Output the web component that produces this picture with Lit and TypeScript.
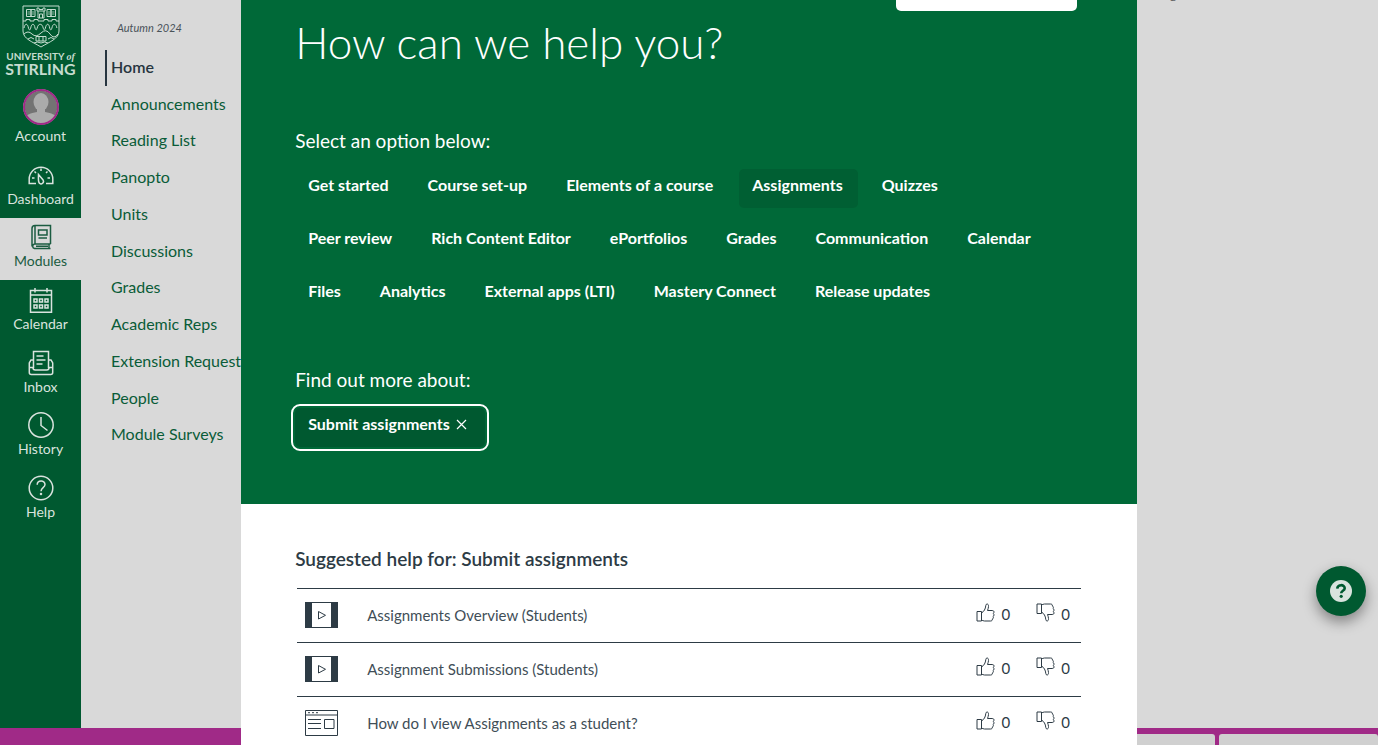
import { LitElement, html, svg, css, type TemplateResult } from "lit";
import { customElement, property, state } from "lit/decorators.js";
import { classMap } from "lit/directives/class-map.js";

const navIcons: Record<string, TemplateResult> = {
  Account: html`<svg class="avatar" viewBox="0 0 36 36" aria-hidden="true">
    <clipPath id="face"><circle cx="18" cy="18" r="17" /></clipPath>
    <circle cx="18" cy="18" r="17" fill="#737373" />
    <g clip-path="url(#face)" fill="#ababab" stroke="none">
      <ellipse cx="18" cy="13" rx="7.500" ry="9" />
      <path d="M14 18h8v5c7 1 10 3 12 5v8H2v-8c2-2 5-4 12-5z" />
    </g>
    <circle cx="18" cy="18" r="17" fill="none" stroke="#a02a87" stroke-width="2" />
  </svg>`,
  Dashboard: html`<svg viewBox="0 0 26 26" aria-hidden="true">
    <path d="M8 21.500H1.200V17a11.800 11.800 0 0 1 23.600 0v4.500H18" />
    <path d="M4 16h2.500M19.500 16H22M6.500 9.500l1.500 1.500M19.500 9.500l-1.500 1.500M13 6.500V9" />
    <path d="M10.500 12.500l4.600 5.500c1.500 2.600-1.600 5-3.600 3.300-1.600-1.300-1-3-1-8.800z" />
  </svg>`,
  Modules: html`<svg viewBox="0 0 26 26" aria-hidden="true">
    <path d="M22.500 20H6.500a2.300 2.300 0 0 0 0 4.500h16M22.500 20V1.500H7A3 3 0 0 0 4 4.500V22.500M7 2V20M21 20v4.500M8 22.200h12" />
    <path d="M10.500 6h8.500v5h-8.500zM10.500 14h8.500" />
  </svg>`,
  Calendar: html`<svg viewBox="0 0 26 26" aria-hidden="true">
    <path d="M2.500 3.500h21v21.800h-21zM2.500 8h21M7 1v4.500M19 1v4.500" />
    <path d="M6 12h3v3H6zM11.500 12h3v3h-3zM17 12h3v3h-3zM6 18h3v3H6zM11.500 18h3v3h-3zM17 18h3v3h-3z" />
  </svg>`,
  Inbox: html`<svg viewBox="0 0 26 26" aria-hidden="true">
    <path d="M5.500 18V1.500h15V18M8.500 6h7M8.500 10h9M8.500 14h6" />
    <path d="M5.500 10H3l-1.700 3v9.500a2 2 0 0 0 2 2h19.400a2 2 0 0 0 2-2V13L23 10h-2.500M1.300 17.500H5c0 1.500.8 2.500 2.200 2.500h11.600c1.400 0 2.200-1 2.200-2.500h3.700" />
  </svg>`,
  History: html`<svg viewBox="0 0 26 26" aria-hidden="true">
    <circle cx="13" cy="13" r="12.200" /><path d="M13 5v8.500l6.500 5" />
  </svg>`,
  Help: html`<svg viewBox="0 0 26 26" aria-hidden="true">
    <circle cx="13" cy="13" r="11.800" />
    <path d="M9.200 9.800c0-5 7.800-5 7.800-.3 0 3-4 3.200-4 6.700" />
    <circle cx="13" cy="19" r=".5" />
  </svg>`,
};

const courseLinks = [
  "Home", "Announcements", "Reading List", "Panopto", "Units", "Discussions",
  "Grades", "Academic Reps", "Extension Requests", "People", "Module Surveys",
];

const topics = [
  "Get started", "Course set-up", "Elements of a course", "Assignments", "Quizzes",
  "Peer review", "Rich Content Editor", "ePortfolios", "Grades", "Communication",
  "Calendar", "Files", "Analytics", "External apps (LTI)", "Mastery Connect", "Release updates",
];

const results = [
  { kind: "video", title: "Assignments Overview (Students)", up: 0, down: 0 },
  { kind: "video", title: "Assignment Submissions (Students)", up: 0, down: 0 },
  { kind: "guide", title: "How do I view Assignments as a student?", up: 0, down: 0 },
];

@customElement("global-nav")
class GlobalNav extends LitElement {
  static styles = css`
    :host {
      display: block;
      width: 81px;
      flex: none;
      background: #005930;
      color: #d9e3de;
    }
    .logo {
      display: flex;
      flex-direction: column;
      align-items: center;
      height: 88px;
      box-sizing: border-box;
      padding-top: 5px;
      color: #c5dccf;
      text-decoration: none;
      white-space: nowrap;
    }
    .shield { width: 38px; height: 44px; fill: none; stroke: currentColor; }
    .uni { font-size: 10px; line-height: 14px; font-weight: 700; }
    .of { font-family: "Liberation Serif", serif; font-style: italic; }
    .city { font-size: 16px; line-height: 10px; font-weight: 700; }
    .items {
      display: grid;
      grid-template-rows: auto;
      grid-auto-rows: 1fr;
      height: 443px;
      margin: 0;
      padding: 0;
      list-style: none;
    }
    .item {
      display: flex;
      flex-direction: column;
      align-items: center;
      justify-content: flex-end;
      height: 100%;
      box-sizing: border-box;
      padding-bottom: 10px;
      gap: 2px;
      color: inherit;
      font-size: 14px;
      line-height: 18px;
      text-decoration: none;
    }
    .current { background: #d9d9d9; color: #1b5c41; }
    .item svg { width: 26px; height: 26px; fill: none; stroke: currentColor; stroke-width: 1.5; }
    .item .avatar { width: 36px; height: 36px; padding-top: 1px; }
  `;
  render() {
    return html`
      <a class="logo" href="#" aria-label="University of Stirling">
        <svg class="shield" viewBox="0 0 38 44" stroke-width="1" aria-hidden="true">
          <path d="M1 1h36v25c0 8-10 11-18 16C11 37 1 34 1 26z" />
          <path d="M1 16h3v-1.500h4V16h4v-1.500h4V16h6v-1.500h4V16h4v-1.500h4V16h3" />
          <path d="M4.500 4.500h4.500v7H4.500zM9 4.500h4v7H9zM25 4.500h4v7h-4zM29 4.500h4.500v7H29zM15 3v3h8V3h-2v1.500h-4V3zM16 6v7h6V6M17.500 13V9h3v4" />
          <path d="M5.500 7H8M5.500 9H8M10 7h2M10 9h2M26 7h2M26 9h2M30 7h2.500M30 9h2.500" stroke-width=".7" />
          <path d="M2 23c1-5 3.500-5 4.500 0 .8 2.500 1.500 2.500 2.200 0 1-5 3.500-5 4.300 0 .8 2.500 1.500 2.500 2.200 0 1-5 5-5 6 0 .8 2.500 1.500 2.500 2.200 0 1-5 3.500-5 4.300 0 .8 2.500 1.500 2.500 2.200 0 1-5 4-5 5 0" />
          <path d="M2 29q4-4 8 0t9-1 9 1 8 0M6 34q3-3 6 0M26 34q3-3 6 0M12 38q3-2 7 0 4-2 7 0" />
          <path d="M14 31.500h10v4.500H14zM17 31.500V36M21 31.500V36" />
        </svg>
        <span class="uni">UNIVERSITY <span class="of">of</span></span>
        <span class="city">STIRLING</span>
      </a>
      <ul class="items">
        ${Object.entries(navIcons).map(([name, icon]) => html`<li>
          <a href="#" class=${classMap({ item: true, current: name === "Modules" })}>${icon}<span>${name}</span></a>
        </li>`)}
      </ul>`;
  }
}

@customElement("course-menu")
class CourseMenu extends LitElement {
  static styles = css`
    :host { display: block; width: 160px; flex: none; }
    .term {
      margin: 0;
      padding: 20px 0 14px 36px;
      font-size: 11px;
      line-height: 16px;
      font-style: italic;
      color: #4a5359;
    }
    .links {
      display: grid;
      grid-auto-rows: 1fr;
      height: 404px;
      margin: 0 0 0 24px;
      padding: 0;
      list-style: none;
    }
    .link {
      display: block;
      padding: 0 0 2px 4px;
      border-left: 2px solid transparent;
      font-size: 16px;
      line-height: 34px;
      color: #0a5c38;
      text-decoration: none;
      white-space: nowrap;
    }
    .current { border-color: #273540; color: #273540; font-weight: 600; }
  `;
  render() {
    return html`<p class="term">Autumn 2024</p>
      <ul class="links">
        ${courseLinks.map((name, i) => html`<li>
          <a href="#" class=${classMap({ link: true, current: i === 0 })}>${name}</a>
        </li>`)}
      </ul>`;
  }
}

const thumb = svg`<path d="M1 8.500h4.500v9.500H1zM5.500 10c2.500-1.500 4-4 4.300-7.500C10 .2 12.800.5 12.500 3.500c0 1.500-.6 2.700-1 4h4.700c2.300 0 2.300 2.500 1 3 1.200.8 1 2.500-.2 3 .7 1 .4 2.300-.7 2.500.3 1.300-.5 2-1.800 2H8.500c-1.300 0-2-.6-3-1" />`;

@customElement("help-result")
class HelpResult extends LitElement {
  @property() kind = "video";
  @property() label = "";
  @property({ type: Number }) up = 0;
  @property({ type: Number }) down = 0;
  static styles = css`
    :host {
      display: flex;
      align-items: center;
      height: 53px;
      border-top: 1px solid #2d3b45;
      padding: 0 11px 0 8px;
      color: #2d3b45;
    }
    .kind { width: 33px; height: 26px; padding-bottom: 1px; flex: none; fill: none; stroke: currentColor; }
    .title {
      flex: 1;
      padding: 0 0 2px 29px;
      color: #414e57;
      font-size: 15px;
      line-height: 20px;
      text-decoration: none;
    }
    .vote {
      display: flex;
      align-items: center;
      gap: 6px;
      margin-left: 26px;
      padding: 0 0 4px;
      border: 0;
      background: none;
      color: inherit;
      font: inherit;
      font-size: 15px;
      line-height: 20px;
    }
    .thumb { width: 19px; height: 19px; padding-bottom: 2px; fill: none; stroke: currentColor; stroke-width: 1; stroke-linejoin: round; }
  `;
  render() {
    const icon = this.kind === "video"
      ? html`<svg class="kind" viewBox="0 0 33 26" aria-hidden="true">
          <path d="M.5.500h32v25H.5z" /><path d="M0 0h7v26H0zM26 0h7v26h-7z" fill="currentColor" stroke="none" />
          <path d="M13.500 9.500v7.500l7-3.700z" />
        </svg>`
      : html`<svg class="kind" viewBox="0 0 33 26" aria-hidden="true">
          <path d="M.5.500h32v25H.5zM.5 5h32M3 2.700h2M7 2.700h2M11 2.700h2M3 9.500h13M3 13.500h13M3 18.500h13M19.500 9.500h9.500v9h-9.500z" />
        </svg>`;
    return html`${icon}
      <a class="title" href="#">${this.label}</a>
      <button class="vote" aria-label="Helpful">
        <svg class="thumb" viewBox="0 0 19 19">${thumb}</svg>${this.up}
      </button>
      <button class="vote" aria-label="Not helpful">
        <svg class="thumb" viewBox="0 0 19 19"><g transform="matrix(1 0 0 -1 0 19)">${thumb}</g></svg>${this.down}
      </button>`;
  }
}

@customElement("help-dialog")
class HelpDialog extends LitElement {
  @state() topic = "Assignments";
  static styles = css`
    :host { display: block; width: 65%; height: 100%; overflow: hidden; background: #fff; }
    .hero { background: #006938; color: #fff; padding: 0 56px 57px 54px; }
    .top { display: flex; justify-content: flex-end; padding-right: 4px; }
    .action { width: 181px; height: 11px; padding: 0; border: 0; border-radius: 0 0 5px 5px; background: #fff; }
    .title { margin: 0; padding: 3px 0 2px; font-size: 44px; line-height: 56px; font-weight: 300; }
    .lead { margin: 0; font-size: 19px; line-height: 24px; font-weight: 400; }
    .select { padding-top: 57px; }
    .topics { display: flex; flex-wrap: wrap; row-gap: 14px; padding-top: 16px; }
    .chip {
      height: 39px;
      margin: 0 11px 0 0;
      padding: 0 15px 8px 13px;
      border: 0;
      border-radius: 5px;
      background: none;
      color: inherit;
      font: inherit;
      font-size: 16px;
      line-height: 20px;
      font-weight: 700;
    }
    .on { background: #005f33; }
    .find { padding-top: 54px; }
    .picked {
      display: flex;
      align-items: center;
      gap: 6px;
      margin-top: 16px;
      padding-right: 18px;
      background: #005930;
      outline: 2px solid #fff;
      outline-offset: 2px;
    }
    .close { width: 11px; height: 11px; padding-top: 2px; stroke: currentColor; fill: none; stroke-width: 1.2; }
    .results { padding: 0 56px; color: #2d3b45; }
    .heading { margin: 0 -2px; padding: 43px 0 17px; font-size: 19px; line-height: 24px; font-weight: 600; }
  `;
  render() {
    return html`
      <section class="hero">
        <div class="top"><button class="action" aria-label="Search"></button></div>
        <h1 class="title">How can we help you?</h1>
        <h2 class="lead select">Select an option below:</h2>
        <div class="topics">
          ${topics.map((t) => html`<button class=${classMap({ chip: true, on: t === this.topic })}
            @click=${() => (this.topic = t)}>${t}</button>`)}
        </div>
        <h2 class="lead find">Find out more about:</h2>
        <button class="chip picked">Submit assignments
          <svg class="close" viewBox="0 0 11 11" aria-hidden="true"><path d="M1 1l9 9M10 1l-9 9" /></svg>
        </button>
      </section>
      <section class="results">
        <h2 class="heading">Suggested help for: Submit assignments</h2>
        ${results.map((r) => html`<help-result .kind=${r.kind} .label=${r.title} .up=${r.up} .down=${r.down}></help-result>`)}
      </section>`;
  }
}

@customElement("app-root")
class AppRoot extends LitElement {
  static styles = css`
    :host {
      display: flex;
      flex-direction: column;
      position: relative;
      height: 100vh;
      overflow: hidden;
      background: #d9d9d9;
      font-family: Lato, sans-serif;
    }
    .shell { display: flex; flex: 1; min-height: 0; }
    .content { flex: 1; }
    .rail { width: 208px; color: #555; font-size: 12px; }
    .note { margin: -12px 0 0; line-height: 14px; }
    .footer { display: flex; gap: 4px; height: 11px; padding-top: 6px; background: #a02a87; }
    .cell { width: 159px; border-radius: 3px 3px 0 0; background: #d0d0d0; }
    .spacer { flex: 1; }
    .overlay { position: absolute; inset: 0; display: flex; justify-content: center; }
    .fab {
      position: absolute;
      right: 12px;
      bottom: 129px;
      width: 50px;
      height: 50px;
      padding: 0;
      border: 0;
      border-radius: 50%;
      background: #005930;
      color: #d9e3de;
      box-shadow: 0 6px 14px rgba(0, 0, 0, 0.4);
      display: grid;
      place-items: center;
    }
    .mark { width: 22px; height: 22px; fill: none; }
  `;
  render() {
    return html`
      <div class="shell">
        <global-nav></global-nav>
        <course-menu></course-menu>
        <main class="content"></main>
        <aside class="rail"><p class="note">g</p></aside>
      </div>
      <footer class="footer">
        <div class="spacer"></div><div class="cell"></div><div class="cell"></div>
      </footer>
      <div class="overlay"><help-dialog role="dialog" aria-label="Help"></help-dialog></div>
      <button class="fab" aria-label="Help">
        <svg class="mark" viewBox="0 0 22 22">
          <circle cx="11" cy="11" r="11" fill="currentColor" />
          <path d="M7.200 8.600C7.800 4 14.700 4.200 14.700 8.200c0 2.600-3.500 2.600-3.500 5" stroke="#005930" stroke-width="2.600" />
          <circle cx="11.200" cy="16.300" r="1.600" fill="#005930" />
        </svg>
      </button>`;
  }
}
